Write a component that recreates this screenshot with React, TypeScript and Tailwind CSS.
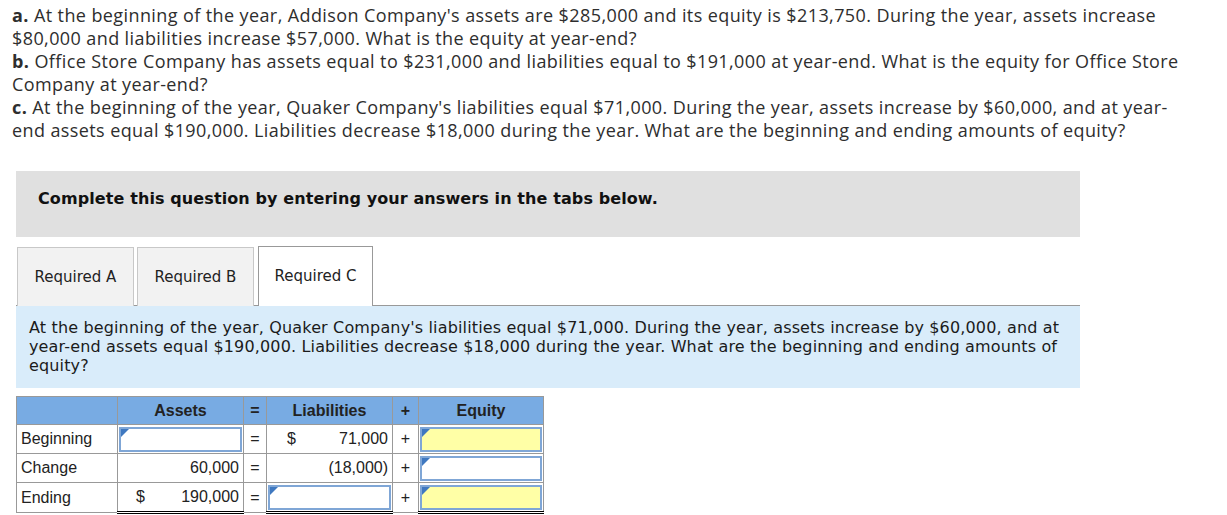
import React from "react";

const Tri = () => (
  <span className="absolute left-0 top-0 w-0 h-0 border-t-[8px] border-t-[#3f78c0] border-r-[8px] border-r-transparent" />
);

const Input = ({ yellow }: { yellow?: boolean }) => (
  <div
    className={`relative h-[25px] mx-[1px] border-2 border-[#7fa6d6] ${
      yellow ? "bg-[#ffffa6]" : "bg-white"
    }`}
  >
    <Tri />
  </div>
);

export default function App() {
  const topFont = { fontFamily: "'Open Sans', 'Liberation Sans', sans-serif" };
  return (
    <div className="w-[1227px] h-[515px] bg-white overflow-hidden relative">
      <div
        className="pl-[12px] pt-[4px] text-[18px] leading-[23px] tracking-[0.4px] text-[#2e2e2e] whitespace-nowrap"
        style={topFont}
      >
        <div>
          <b>a.</b> At the beginning of the year, Addison Company's assets are $285,000 and its equity is $213,750. During the year, assets increase
        </div>
        <div>$80,000 and liabilities increase $57,000. What is the equity at year-end?</div>
        <div>
          <b>b.</b> Office Store Company has assets equal to $231,000 and liabilities equal to $191,000 at year-end. What is the equity for Office Store
        </div>
        <div>Company at year-end?</div>
        <div>
          <b>c.</b> At the beginning of the year, Quaker Company's liabilities equal $71,000. During the year, assets increase by $60,000, and at year-
        </div>
        <div>end assets equal $190,000. Liabilities decrease $18,000 during the year. What are the beginning and ending amounts of equity?</div>
      </div>

      <div className="ml-[16px] w-[1064px]" style={{ fontFamily: "'DejaVu Sans', Verdana, sans-serif" }}>
        <div className="mt-[29px] h-[66px] bg-[#e0e0e0] flex items-center pl-[22px] pb-[10px]">
          <span className="font-bold text-[16px] tracking-[0.1px] text-[#111]">
            Complete this question by entering your answers in the tabs below.
          </span>
        </div>

        <div className="mt-[10px] flex items-end h-[59px] border-b border-[#999]">
          <div className="w-[117px] h-[59px] ml-[1px] bg-[#f2f2f2] border border-b-0 border-[#c8c8c8] flex items-center justify-center text-[15px] text-[#222] -mb-px">
            Required A
          </div>
          <div className="w-[117px] h-[59px] ml-[3px] bg-[#f2f2f2] border border-b-0 border-[#c8c8c8] flex items-center justify-center text-[15px] text-[#222] -mb-px">
            Required B
          </div>
          <div className="w-[115px] h-[60px] ml-[4px] bg-white border border-b-0 border-[#999] flex items-center justify-center text-[15px] text-[#222] -mb-px">
            Required C
          </div>
        </div>

        <div className="h-[82px] bg-[#d9ecfa] pl-[13px] pt-[12px] text-[16px] leading-[19px] tracking-[0.15px] text-[#1b1b1b] whitespace-nowrap">
          At the beginning of the year, Quaker Company's liabilities equal $71,000. During the year, assets increase by $60,000, and at
          <br />
          year-end assets equal $190,000. Liabilities decrease $18,000 during the year. What are the beginning and ending amounts of
          <br />
          equity?
        </div>
      </div>

      <table
        className="ml-[16px] mt-[8px] border-collapse text-[16px] text-[#222]"
        style={{ fontFamily: "'Liberation Sans', Arial, sans-serif" }}
      >
        <colgroup>
          <col className="w-[101px]" />
          <col className="w-[126px]" />
          <col className="w-[23px]" />
          <col className="w-[126px]" />
          <col className="w-[26px]" />
          <col className="w-[125px]" />
        </colgroup>
        <thead>
          <tr className="h-[28px] bg-[#78abe3] font-bold">
            <th className="border border-[#999]" />
            <th className="border border-[#999] font-bold">Assets</th>
            <th className="border border-[#999] font-bold">=</th>
            <th className="border border-[#999] font-bold">Liabilities</th>
            <th className="border border-[#999] font-bold">+</th>
            <th className="border border-[#999] font-bold">Equity</th>
          </tr>
        </thead>
        <tbody>
          <tr className="h-[29px]">
            <td className="border border-[#999] pl-[4px]">Beginning</td>
            <td className="border border-[#999] p-0">
              <Input />
            </td>
            <td className="border border-[#999] text-center">=</td>
            <td className="border border-[#999] px-[4px]">
              <div className="flex justify-between">
                <span className="pl-[16px]">$</span>
                <span>71,000</span>
              </div>
            </td>
            <td className="border border-[#999] text-center">+</td>
            <td className="border border-[#999] p-0">
              <Input yellow />
            </td>
          </tr>
          <tr className="h-[29px]">
            <td className="border border-[#999] pl-[4px]">Change</td>
            <td className="border border-[#999] px-[4px] text-right">60,000</td>
            <td className="border border-[#999] text-center">=</td>
            <td className="border border-[#999] px-[4px] text-right">(18,000)</td>
            <td className="border border-[#999] text-center">+</td>
            <td className="border border-[#999] p-0">
              <Input />
            </td>
          </tr>
          <tr className="h-[30px]">
            <td className="border border-[#999] pl-[4px]">Ending</td>
            <td className="border border-[#999] border-t-black border-b-[3px] border-b-black border-double px-[4px] [border-left-style:solid] [border-right-style:solid] [border-top-style:solid]">
              <div className="flex justify-between">
                <span className="pl-[14px]">$</span>
                <span>190,000</span>
              </div>
            </td>
            <td className="border border-[#999] text-center">=</td>
            <td className="border border-[#999] border-t-black border-b-[3px] border-b-black border-double p-0 [border-left-style:solid] [border-right-style:solid] [border-top-style:solid]">
              <Input />
            </td>
            <td className="border border-[#999] text-center">+</td>
            <td className="border border-[#999] border-t-black border-b-[3px] border-b-black border-double p-0 [border-left-style:solid] [border-right-style:solid] [border-top-style:solid]">
              <Input yellow />
            </td>
          </tr>
        </tbody>
      </table>
    </div>
  );
}
